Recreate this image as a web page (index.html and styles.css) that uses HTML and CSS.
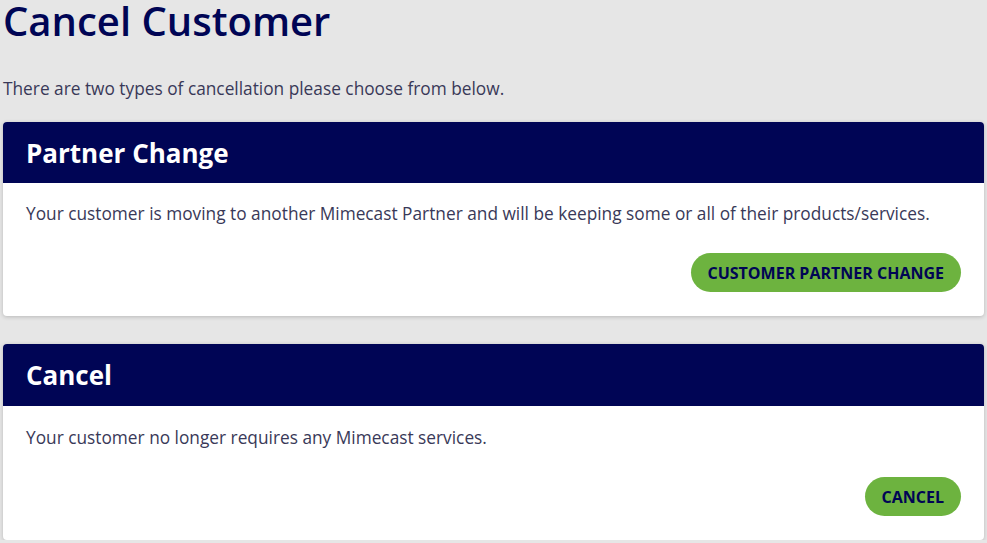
FILE: index.html
```html
<!DOCTYPE html>
<html lang="en">
<head>
    <meta charset="UTF-8">
    <meta name="viewport" content="width=device-width, initial-scale=1.0">
    <title>Cancel Customer</title>
    <link rel="stylesheet" href="styles.css">
</head>
<body>
    <div class="page">
        <h1 class="page-title">Cancel Customer</h1>
        <p class="intro">There are two types of cancellation please choose from below.</p>

        <div class="card">
            <div class="card-header">
                <h2>Partner Change</h2>
            </div>
            <div class="card-body">
                <p>Your customer is moving to another Mimecast Partner and will be keeping some or all of their products/services.</p>
                <div class="actions">
                    <button class="btn">CUSTOMER PARTNER CHANGE</button>
                </div>
            </div>
        </div>

        <div class="card">
            <div class="card-header">
                <h2>Cancel</h2>
            </div>
            <div class="card-body">
                <p>Your customer no longer requires any Mimecast services.</p>
                <div class="actions">
                    <button class="btn">CANCEL</button>
                </div>
            </div>
        </div>
    </div>
</body>
</html>
```

FILE: styles.css
```css
body {
    margin: 0;
    font-family: "Open Sans", Arial, sans-serif;
    background-color: #e6e6e6;
    color: #393958;
}
.page {
    padding: 0 3px;
}
.page-title {
    margin: 0;
    font-size: 40px;
    line-height: 42px;
    font-weight: 600;
    color: #000555;
}
.intro {
    margin: 35px 0 0 0;
    font-size: 17.3px;
    line-height: 24px;
}
.card {
    margin-top: 21px;
    background: #fff;
    border-radius: 4px;
    box-shadow: 0 1px 4px rgba(0,0,0,0.2);
    overflow: hidden;
}
.card + .card {
    margin-top: 28px;
}
.card-header {
    background: #000555;
    height: 61px;
    padding: 0 23px;
    display: flex;
    align-items: center;
}
.card + .card .card-header {
    height: 62px;
}
.card-header h2 {
    margin: 0;
    color: #fff;
    font-size: 26px;
    font-weight: 700;
}
.card-body {
    padding: 19px 23px 24px 23px;
}
.card + .card .card-body {
    padding-top: 20px;
}
.card-body p {
    margin: 0;
    font-size: 17.3px;
    line-height: 24px;
}
.actions {
    display: flex;
    justify-content: flex-end;
    margin-top: 27px;
}
.btn {
    background: #6db33f;
    color: #000555;
    border: none;
    border-radius: 20px;
    height: 39px;
    padding: 0 17px;
    font-family: "Open Sans", Arial, sans-serif;
    font-size: 16px;
    font-weight: 700;
}
```
